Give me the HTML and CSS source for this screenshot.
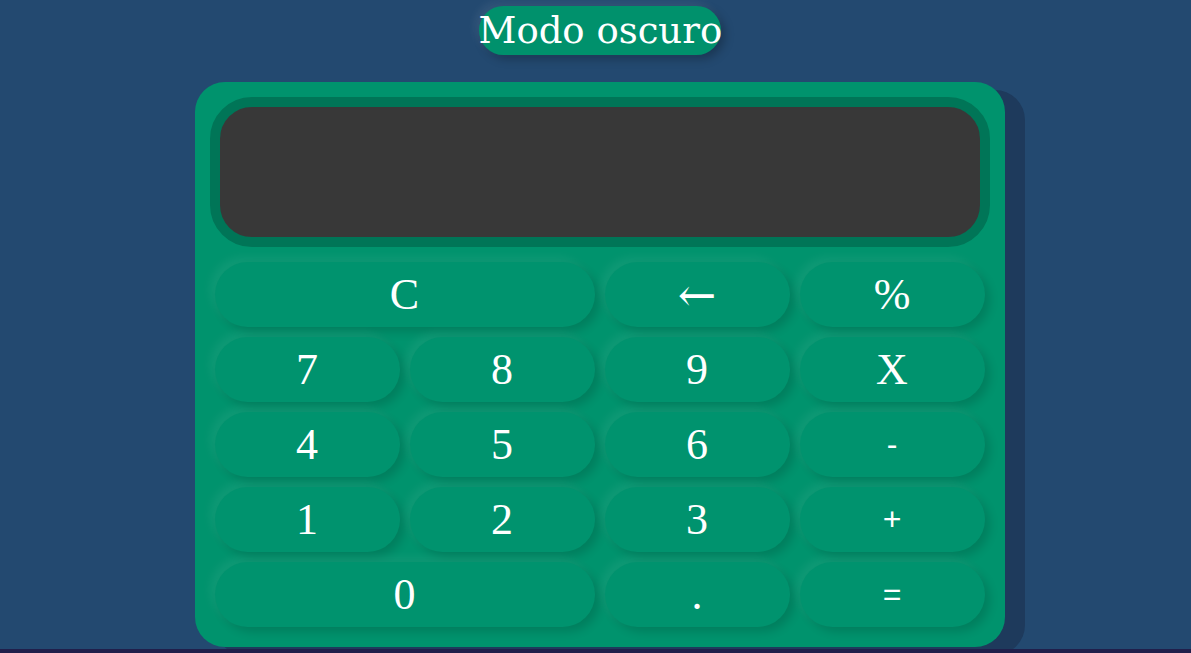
FILE: index.html
```html
<!DOCTYPE html>
<html lang="es">
<head>
<meta charset="utf-8">
<title>Calculadora</title>
<link rel="stylesheet" href="styles.css">
</head>
<body>
<div class="page">
  <button class="mode">Modo oscuro</button>
  <div class="calc">
    <div class="display"></div>
    <div class="keys">
      <button class="key wide">C</button>
      <button class="key arrow">←</button>
      <button class="key">%</button>
      <button class="key">7</button>
      <button class="key">8</button>
      <button class="key">9</button>
      <button class="key">X</button>
      <button class="key">4</button>
      <button class="key">5</button>
      <button class="key">6</button>
      <button class="key sym">-</button>
      <button class="key">1</button>
      <button class="key">2</button>
      <button class="key">3</button>
      <button class="key sym">+</button>
      <button class="key wide">0</button>
      <button class="key">.</button>
      <button class="key sym">=</button>
    </div>
  </div>
</div>
</body>
</html>
```
FILE: styles.css
```css
html {
  background: #201f4b;
}
body {
  margin: 0;
}
.page {
  height: 649px;
  overflow: hidden;
  box-sizing: border-box;
  padding-left: 8px;
  background: #234970;
  display: flex;
  flex-direction: column;
  align-items: center;
  font-family: "DejaVu Serif", "Liberation Serif", serif;
}
.mode {
  margin-top: 6px;
  height: 49px;
  width: 242px;
  padding: 0;
  border: none;
  border-radius: 25px;
  background: #00916c;
  color: #ffffff;
  font-family: inherit;
  font-size: 37px;
  line-height: 49px;
  white-space: nowrap;
  box-shadow: -4px -4px 10px rgba(255, 255, 255, 0.08), 4px 4px 10px rgba(0, 0, 0, 0.25);
}
.calc {
  margin-top: 27px;
  width: 810px;
  height: 565px;
  box-sizing: border-box;
  padding: 15px 15px 20px;
  border-radius: 30px;
  background: #00936d;
  box-shadow: 20px 8px 0 #1e3a5c;
  display: flex;
  flex-direction: column;
  gap: 15px;
}
.display {
  height: 150px;
  box-sizing: border-box;
  border: 10px solid #007557;
  border-radius: 42px;
  background: #383838;
}
.keys {
  margin: 0 5px;
  display: grid;
  grid-template-columns: repeat(4, 185px);
  grid-auto-rows: 65px;
  gap: 10px;
}
.key {
  border: none;
  border-radius: 33px;
  background: #00936e;
  color: #ffffff;
  font-family: "Liberation Serif", "DejaVu Serif", serif;
  font-size: 44px;
  padding: 0;
  box-shadow: -5px -5px 10px rgba(255, 255, 255, 0.06), 5px 5px 10px rgba(0, 0, 0, 0.14);
}
.key.wide {
  grid-column: span 2;
}
.key.arrow {
  font-family: "DejaVu Serif", serif;
  font-size: 46px;
}
.key.sym {
  font-family: "Liberation Sans", "DejaVu Sans", sans-serif;
  font-size: 32px;
}
```
